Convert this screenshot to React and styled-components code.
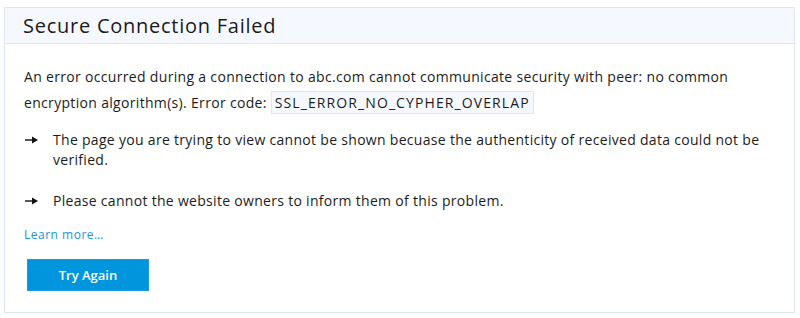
import React from "react";
import styled, { createGlobalStyle } from "styled-components";

const GlobalStyle = createGlobalStyle`
  body {
    margin: 0;
    background: #ffffff;
    font-family: "Open Sans", "Lato", sans-serif;
    color: #1c1c1c;
  }
`;

const Page = styled.div`
  padding: 7px 5px 8px 4px;
`;

const Card = styled.div`
  border: 1px solid #dde5f6;
  background: #fff;
`;

const Header = styled.div`
  height: 35px;
  background: #f6f8ff;
  border-bottom: 1px solid #dde5f6;
  display: flex;
  align-items: center;
  padding-left: 18px;
`;

const Title = styled.h1`
  margin: 0;
  font-weight: 400;
  font-size: 20px;
  letter-spacing: 0.75px;
  color: #1a1a1a;
`;

const Body = styled.div`
  padding: 20px 19px 21px 19px;
`;

const Intro = styled.p`
  margin: 0;
  font-size: 14px;
  line-height: 26px;
  letter-spacing: 0.32px;
`;

const Code = styled.code`
  display: inline-block;
  font-family: inherit;
  line-height: 19px;
  background: #f6f8ff;
  border: 1px solid #dde5f6;
  padding: 1px 3px;
  letter-spacing: 1.1px;
`;

const List = styled.ul`
  list-style: none;
  margin: 14px 0 0;
  padding: 0;
  display: flex;
  flex-direction: column;
  gap: 21px;
`;

const Item = styled.li`
  display: flex;
  gap: 14px;
  font-size: 14px;
  line-height: 20px;
  letter-spacing: 0.3px;
`;

const Arrow = styled.svg`
  flex: none;
  width: 15px;
  height: 20px;
`;

const LearnMore = styled.a`
  display: inline-block;
  margin-top: 15px;
  font-size: 12px;
  color: #1b93d8;
  text-decoration: none;
  letter-spacing: 0.5px;
`;

const Button = styled.button`
  display: block;
  margin: 15px 0 0 3px;
  width: 122px;
  height: 32px;
  border: 1px solid #1a9ae0;
  background: #0095dd;
  color: #fff;
  font-family: inherit;
  font-weight: 600;
  font-size: 13px;
  cursor: pointer;
`;

const ArrowIcon = () => (
  <Arrow viewBox="0 0 15 20">
    <line x1="1" y1="10" x2="10" y2="10" stroke="#111" strokeWidth="1.4" />
    <path d="M8 6.5 L14 10 L8 13.5 Z" fill="#111" />
  </Arrow>
);

const App = () => {
  return (
    <>
      <GlobalStyle />
      <Page>
        <Card>
          <Header>
            <Title>Secure Connection Failed</Title>
          </Header>
          <Body>
            <Intro>
              An error occurred during a connection to abc.com cannot communicate
              security with peer: no common encryption algorithm(s). Error code:{" "}
              <Code>SSL_ERROR_NO_CYPHER_OVERLAP</Code>
            </Intro>
            <List>
              <Item>
                <ArrowIcon />
                <span>
                  The page you are trying to view cannot be shown becuase the
                  authenticity of received data could not be verified.
                </span>
              </Item>
              <Item>
                <ArrowIcon />
                <span>
                  Please cannot the website owners to inform them of this
                  problem.
                </span>
              </Item>
            </List>
            <LearnMore href="#">Learn more…</LearnMore>
            <Button>Try Again</Button>
          </Body>
        </Card>
      </Page>
    </>
  );
};

export default App;
